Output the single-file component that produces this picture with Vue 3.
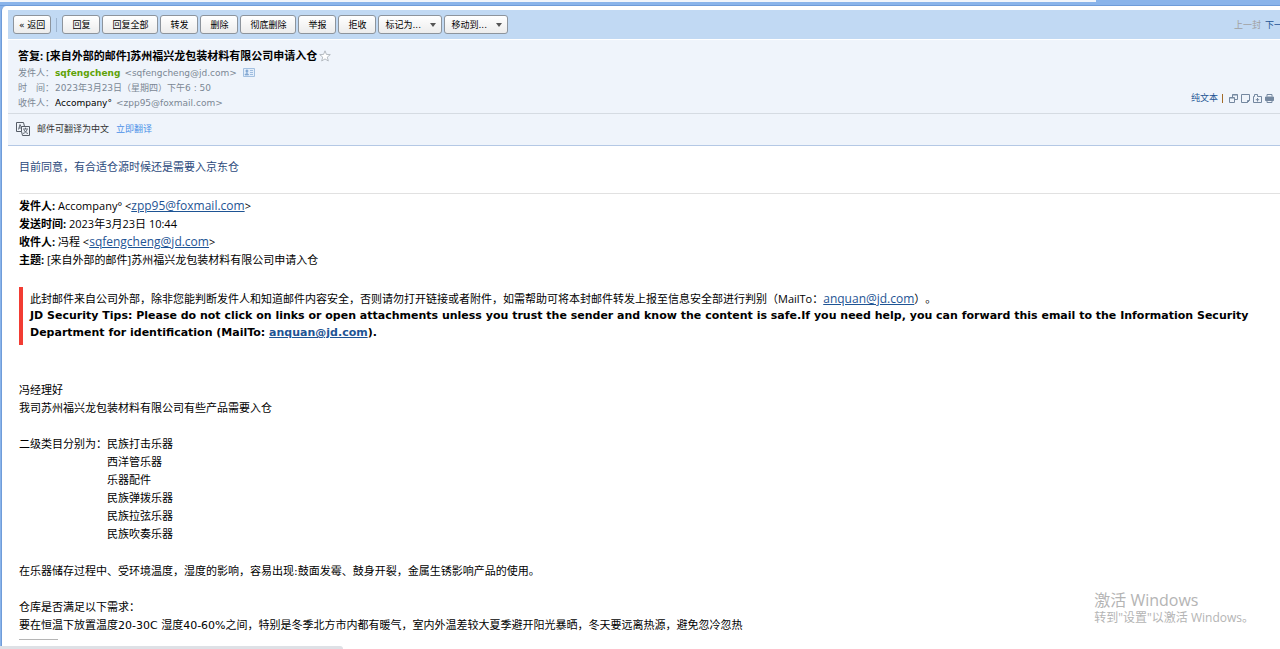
<script setup>
import { ref } from 'vue'

const actions = ['回复', '回复全部', '转发', '删除', '彻底删除', '举报', '拒收']
const menus = [
  { label: '标记为...', options: ['已读邮件', '未读邮件', '星标邮件'] },
  { label: '移动到...', options: ['收件箱', '已发送', '垃圾箱'] },
]
const starred = ref(false)
const categories = ['西洋管乐器', '乐器配件', '民族弹拨乐器', '民族拉弦乐器', '民族吹奏乐器']
</script>

<template>
  <div class="frame">
    <div class="strip"><i></i></div>
    <main class="panel">
      <header class="toolbar">
        <button type="button" class="btn back">« 返回</button>
        <span class="sep"></span>
        <button v-for="a in actions" :key="a" type="button" class="btn">{{ a }}</button>
        <label v-for="m in menus" :key="m.label" class="menu">
          <select class="btn" :aria-label="m.label">
            <option>{{ m.label }}</option>
            <option v-for="o in m.options" :key="o">{{ o }}</option>
          </select>
          <svg width="6" height="4" viewBox="0 0 6 4"><path d="M0 0h6L3 4z" fill="#555" /></svg>
        </label>
        <nav class="pager"><span>上一封</span><a href="#next">下一封</a></nav>
      </header>

      <section class="info">
        <div class="subject">
          <h1>答复: [来自外部的邮件]苏州福兴龙包装材料有限公司申请入仓</h1>
          <button type="button" class="star" aria-label="星标" @click="starred = !starred">
            <svg width="12" height="12" viewBox="0 0 12 12">
              <path d="M6 .8l1.4 3.6 3.9.2-3 2.5 1 3.9L6 8.9l-3.3 2.1 1-3.9-3-2.5 3.900-.2z" :fill="starred ? '#fc3' : '#fff'" stroke="#aeb4bb" stroke-width=".9" />
            </svg>
          </button>
        </div>
        <div class="meta">
          <span class="label">发件人：</span><b class="sender">sqfengcheng</b>
          <span>&lt;sqfengcheng@jd.com&gt;</span>
          <svg class="card" width="12" height="9" viewBox="0 0 12 9">
            <path d="M.5.5h11v8H.5z" fill="#e3eefb" stroke="#a3c0e0" />
            <path d="M2 7c0-2 3.600-2 3.600 0zM3 2h1.800v2.200H3zM7 2.500h3M7 4.500h3M7 6.500h3" fill="#83a8d2" stroke="#83a8d2" stroke-width=".7" />
          </svg>
        </div>
        <div class="meta"><span class="label">时　间：</span><span>2023年3月23日（星期四）下午6 : 50</span></div>
        <div class="meta">
          <span class="label">收件人：</span><span class="to">Accompany°</span>
          <span>&lt;zpp95@foxmail.com&gt;</span>
        </div>
        <div class="tools">
          <a href="#plain">纯文本</a><i></i>
          <button type="button" aria-label="新窗口打开"><svg width="9" height="9" viewBox="0 0 9 9"><path d="M3.500 3V.500h5v5H6M.500 3.500h5v5h-5zM.500 4h5M3.500 1h5" /></svg></button>
          <button type="button" aria-label="便签"><svg width="9" height="9" viewBox="0 0 9 9"><path d="M.500.500h8v6L6.500 8.500h-6zM8.500 6.500h-2v2" /></svg></button>
          <button type="button" aria-label="归档"><svg width="9" height="9" viewBox="0 0 9 9"><path d="M.500 2.500h1v-2h3v2h4v6h-8zM4.500 4v3.500M2.800 5.700h3.400" /></svg></button>
          <button type="button" aria-label="打印"><svg width="9" height="9" viewBox="0 0 9 9"><path d="M2 2.500v-2h5v2M2 6.500v2h5v-2" /><path d="M.500 3h8v3.500h-8z" fill="#7588a0" /></svg></button>
        </div>
      </section>

      <section class="translate">
        <svg width="14" height="14" viewBox="0 0 14 14" fill="none" stroke="#555c66">
          <path d="M5.500 9.500h-5v-9h7l1 4M5.500 4.500h8v9h-7l-1-4z" />
          <path d="M2.500 7.500L4 2.500l1.200 2.500M3 6h2M7 7h5M9.500 5.700V7M8 7.500c.500 2 2 3.500 4 4M11 7.500c-.500 2-2 3.500-4 4" stroke-width=".9" />
        </svg>
        <span>邮件可翻译为中文</span><a href="#translate">立即翻译</a>
      </section>

      <article class="mail">
        <p class="reply">目前同意，有合适仓源时候还是需要入京东仓</p>
        <hr>
        <div class="quoted">
          <p><b>发件人:</b> Accompany° &lt;<a href="mailto:zpp95@foxmail.com">zpp95@foxmail.com</a>&gt;</p>
          <p><b>发送时间:</b> 2023年3月23日 10:44</p>
          <p><b>收件人:</b> 冯程 &lt;<a href="mailto:sqfengcheng@jd.com">sqfengcheng@jd.com</a>&gt;</p>
          <p><b>主题:</b> [来自外部的邮件]苏州福兴龙包装材料有限公司申请入仓</p>
        </div>
        <blockquote class="warning">
          <p>此封邮件来自公司外部，除非您能判断发件人和知道邮件内容安全，否则请勿打开链接或者附件，如需帮助可将本封邮件转发上报至信息安全部进行判别（MailTo：<a href="mailto:anquan@jd.com">anquan@jd.com</a>）。</p>
          <p class="tips">JD Security Tips: Please do not click on links or open attachments unless you trust the sender and know the content is safe.If you need help, you can forward this email to the Information Security Department for identification (MailTo: <a href="mailto:anquan@jd.com">anquan@jd.com</a>).</p>
        </blockquote>
        <div class="letter">
          <p>冯经理好</p>
          <p>我司苏州福兴龙包装材料有限公司有些产品需要入仓</p>
          <div class="kinds">
            <span>二级类目分别为：</span>
            <ul><li>民族打击乐器</li><li v-for="c in categories" :key="c">{{ c }}</li></ul>
          </div>
          <p>在乐器储存过程中、受环境温度，湿度的影响，容易出现:鼓面发霉、鼓身开裂，金属生锈影响产品的使用。</p>
          <p class="gap">仓库是否满足以下需求：</p>
          <p>要在恒温下放置温度20-30C 湿度40-60%之间，特别是冬季北方市内都有暖气，室内外温差较大夏季避开阳光暴晒，冬天要远离热源，避免忽冷忽热</p>
          <div class="sign"></div>
        </div>
      </article>
    </main>
    <div class="status"></div>
    <aside class="watermark"><strong>激活 Windows</strong><span>转到"设置"以激活 Windows。</span></aside>
  </div>
</template>

<style>
body { background: #fff; overflow: hidden; }
</style>

<style scoped>
.frame {
  position: relative; height: 100vh; overflow: hidden; box-sizing: border-box;
  display: flex; flex-direction: column; background: #8ab4ea; text-spacing-trim: space-all;
  font: 9px/14px "DejaVu Sans", "Noto Sans CJK SC", sans-serif; color: #000;
}
p, h1, ul, blockquote { margin: 0; padding: 0; }
ul { list-style: none; }
a { color: #1e5494; text-decoration: none; }
button { font: inherit; cursor: pointer; }
.strip { flex: none; height: 6px; box-sizing: border-box; background: #8ab4ea; border-bottom: 1px solid #6f9cd9; display: flex; }
.strip i { flex: 0 0 1096px; height: 2px; background: #f1f5fb; }
.panel { flex: 1; min-height: 0; margin: 0 -16px 0 1px; padding: 4px 0 0 6px; background: #fff; border-left: 1px solid #6f9cd9; border-top-left-radius: 5px; }
.toolbar { display: flex; align-items: center; height: 29px; padding: 0 4px 0 5px; background: #c1d9f3; border-bottom: 1px solid #fff; gap: 2px; }
.btn {
  box-sizing: border-box; height: 19px; padding: 0 9px; border: 1px solid #8d949c; border-radius: 3px;
  background: linear-gradient(#fff, #ececec); font: 9px/16px "DejaVu Sans", "Noto Sans CJK SC", sans-serif; color: #000; white-space: nowrap;
}
.back { padding: 0 5px; }
.sep { width: 1px; height: 14px; margin: 0 3px; background: #9db4cf; }
.menu { position: relative; display: flex; }
.menu select { appearance: none; width: 64px; padding: 0 6px; }
.menu svg { position: absolute; right: 6px; top: 8px; }
.pager { margin-left: auto; display: flex; gap: 4px; color: #a0a0a0; }
.info { position: relative; padding: 7px 10px 3px; background: #eff4fb; border-bottom: 1px solid #d5dbe2; color: #7b8794; }
.subject { display: flex; align-items: center; gap: 2px; height: 17px; margin-bottom: 1px; }
h1 { font: bold 11px/17px "Open Sans", "Noto Sans CJK SC", sans-serif; color: #000; }
.star { display: flex; padding: 0; border: 0; background: none; }
.meta { display: flex; align-items: center; height: 15px; white-space: nowrap; gap: 4px; }
.label { width: 33px; }
.sender { color: #5fa207; }
.to { color: #000; }
.card { margin-left: 2px; }
.tools { position: absolute; right: 22px; bottom: 8px; display: flex; align-items: center; gap: 3px; }
.tools i { width: 1px; height: 9px; background: #a36b28; margin: 0 3px 0 1px; }
.tools button { display: flex; padding: 0; border: 0; background: none; }
.tools svg { fill: none; stroke: #7588a0; }
.translate { display: flex; align-items: center; height: 29px; padding: 0 0 2px 8px; gap: 7px; background: #eff4fb; border-bottom: 1px solid #b4c8e5; color: #333; }
.translate a { color: #4a90e8; }
.mail { padding: 12px 16px 0 11px; font: 11px/18px "Open Sans", "Noto Sans CJK SC", sans-serif; }
.reply { color: #2c4a7c; }
hr { height: 1px; border: 0; background: #e1e1e1; margin: 17px 0 3px; }
.mail a { color: #1e5494; text-decoration: underline; font-size: 12px; }
.warning { margin-top: 18px; padding: 3px 8px 4px 7px; border-left: 4px solid #f23c33; line-height: 17px; }
.tips { font: bold 11px/17px "DejaVu Sans", sans-serif; }
.mail .tips a { font-size: 11px; }
.letter { margin-top: 37px; font-family: "DejaVu Sans", "Noto Sans CJK SC", sans-serif; }
.kinds { display: flex; margin: 18px 0 19px; }
.gap { margin-top: 18px; }
.sign { width: 39px; height: 1px; margin-top: 4px; background: #b5b5b5; }
.status { position: absolute; left: 0; bottom: 0; width: 343px; height: 3px; background: #dee1e6; border-top-right-radius: 3px; }
.watermark { position: absolute; right: 26px; bottom: 22px; display: flex; flex-direction: column; color: #b4b4b4; font: 12px/18px "Open Sans", "Noto Sans CJK SC", sans-serif; }
.watermark strong { font-weight: 400; font-size: 16px; }
</style>
